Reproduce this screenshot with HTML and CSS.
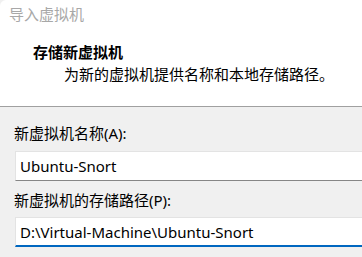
FILE: index.html
```html
<!DOCTYPE html>
<html lang="zh-CN">
<head>
    <meta charset="UTF-8">
    <title>导入虚拟机</title>
    <link rel="stylesheet" href="styles.css">
</head>
<body>
    <div class="wizard">
        <div class="top">
            <div class="win-title">导入虚拟机</div>
            <div class="step-name">存储新虚拟机</div>
            <div class="step-desc">为新的虚拟机提供名称和本地存储路径。</div>
        </div>
        <div class="form">
            <label class="field-label" for="vm-name">新虚拟机名称(<u>A</u>):</label>
            <input class="field" id="vm-name" type="text" value="Ubuntu-Snort">
            <label class="field-label" for="vm-path">新虚拟机的存储路径(<u>P</u>):</label>
            <input class="field field-focus" id="vm-path" type="text" value="D:\Virtual-Machine\Ubuntu-Snort">
        </div>
    </div>
</body>
</html>
```

FILE: styles.css
```css
*{
    margin:0;
    padding:0;
    box-sizing:border-box;
}
body{
    width:362px;
    height:257px;
    overflow:hidden;
    background:#f0f0f0;
    font-family:"Noto Sans","Noto Sans CJK SC",sans-serif;
    font-size:15px;
    color:#000;
}
.wizard{
    height:257px;
}
.top{
    background:#fff;
    height:107px;
    padding-top:4px;
    border-bottom:1px solid #a0a0a0;
    border-top-left-radius:6px;
}
.win-title{
    padding-left:9px;
    line-height:20px;
    color:#a8a8a8;
    font-family:"Noto Sans CJK SC",sans-serif;
}
.step-name{
    margin-top:18px;
    padding-left:33px;
    line-height:20px;
    font-weight:bold;
    font-family:"Noto Sans CJK SC",sans-serif;
}
.step-desc{
    margin-top:2px;
    padding-left:64px;
    line-height:20px;
    font-family:"Noto Sans CJK SC",sans-serif;
}
.form{
    padding:16px 0 0 15px;
}
.field-label{
    display:block;
    margin-left:-1px;
    line-height:20px;
}
.field-label u{
    text-decoration:none;
}
.field{
    display:block;
    width:100%;
    height:30px;
    margin:8px 0 9px;
    padding:0 0 0 4px;
    border:1px solid #e3e3e3;
    border-bottom-color:#868686;
    border-right:none;
    background:#fff;
    font-family:"Noto Sans","Noto Sans CJK SC",sans-serif;
    font-size:15px;
    color:#000;
    outline:none;
}
.field-focus{
    margin-top:7px;
    border-bottom:2px solid #0067c0;
}
```
